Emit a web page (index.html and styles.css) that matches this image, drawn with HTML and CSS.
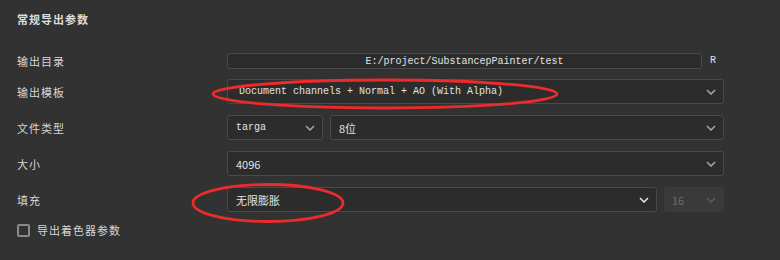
FILE: index.html
```html
<!DOCTYPE html>
<html lang="zh">
<head>
  <meta charset="UTF-8" />
  <title>常规导出参数</title>
  <link rel="stylesheet" href="styles.css">
</head>
<body>
  <main class="panneau">
    <h2 class="titre">常规导出参数</h2>

    <div class="ligne ligne-chemin">
      <span class="label">输出目录</span>
      <div class="champs">
        <div class="saisie mono centre">E:/project/SubstancepPainter/test</div>
        <span class="bouton-r">R</span>
      </div>
    </div>

    <div class="ligne">
      <span class="label">输出模板</span>
      <div class="champs">
        <div class="select mono">
          <span>Document channels + Normal + AO (With Alpha)</span>
          <svg class="chevron" width="10" height="6" viewBox="0 0 10 6"><polyline points="1,1 5,5 9,1" /></svg>
        </div>
      </div>
    </div>

    <div class="ligne">
      <span class="label">文件类型</span>
      <div class="champs">
        <div class="select mono petit">
          <span>targa</span>
          <svg class="chevron" width="10" height="6" viewBox="0 0 10 6"><polyline points="1,1 5,5 9,1" /></svg>
        </div>
        <div class="select">
          <span>8位</span>
          <svg class="chevron" width="10" height="6" viewBox="0 0 10 6"><polyline points="1,1 5,5 9,1" /></svg>
        </div>
      </div>
    </div>

    <div class="ligne">
      <span class="label">大小</span>
      <div class="champs">
        <div class="select">
          <span>4096</span>
          <svg class="chevron" width="10" height="6" viewBox="0 0 10 6"><polyline points="1,1 5,5 9,1" /></svg>
        </div>
      </div>
    </div>

    <div class="ligne">
      <span class="label">填充</span>
      <div class="champs">
        <div class="select">
          <span>无限膨胀</span>
          <svg class="chevron clair" width="10" height="6" viewBox="0 0 10 6"><polyline points="1,1 5,5 9,1" /></svg>
        </div>
        <div class="select inactif">
          <span>16</span>
          <svg class="chevron" width="10" height="6" viewBox="0 0 10 6"><polyline points="1,1 5,5 9,1" /></svg>
        </div>
      </div>
    </div>

    <label class="case">
      <span class="carre"></span>
      <span>导出着色器参数</span>
    </label>
  </main>

  <!-- annotations rouges par-dessus la capture -->
  <svg class="annotations" width="780" height="260" viewBox="0 0 780 260">
    <ellipse cx="385" cy="94" rx="172" ry="14" />
    <ellipse cx="268" cy="203" rx="75" ry="18.5" />
  </svg>
</body>
</html>
```

FILE: styles.css
```css
body {
  margin: 0;
  padding: 0;
  width: 780px;
  height: 260px;
  background-color: #323232;
  color: #d6d6d6;
  font-family: "Noto Sans CJK SC", "Liberation Sans", sans-serif;
  font-size: 11px;
  overflow: hidden;
  position: relative;
}

.panneau {
  padding: 10px 56px 0 17px;
  display: flex;
  flex-direction: column;
}

.titre {
  margin: 0 0 24px 0;
  height: 18px;
  line-height: 18px;
  font-size: 11px;
  font-weight: bold;
  letter-spacing: 1px;
  color: #dcdcdc;
}

.ligne {
  display: grid;
  grid-template-columns: 210px 1fr;
  align-items: center;
  height: 25px;
  margin-bottom: 11px;
}

.ligne-chemin {
  height: 16px;
  margin-top: 1px;
  margin-bottom: 10px;
}

.label {
  letter-spacing: 1px;
}

.champs {
  display: flex;
  gap: 7px;
  height: 100%;
}

.saisie, .select {
  box-sizing: border-box;
  height: 100%;
  border: 1px solid #4a4a4a;
  border-radius: 3px;
  background-color: #2c2c2c;
  color: #e2e2e2;
  display: flex;
  align-items: center;
  flex: 1;
}

.saisie {
  padding: 0 8px;
}

.centre {
  justify-content: center;
}

.bouton-r {
  width: 14px;
  padding-left: 1px;
  font-family: "Liberation Mono", monospace;
  font-size: 10px;
  line-height: 16px;
  color: #e0e0e0;
}

.select {
  justify-content: space-between;
  padding: 0 7px 0 8px;
}

.mono {
  font-family: "Liberation Mono", monospace;
  font-size: 10px;
}

.select.mono:not(.petit) {
  padding-left: 11px;
}

.petit {
  flex: 0 0 96px;
}

.chevron polyline {
  fill: none;
  stroke: #a8a8a8;
  stroke-width: 1.5;
}

.chevron.clair polyline {
  stroke: #e6e6e6;
}

.inactif {
  flex: 0 0 60px;
  border: none;
  background-color: #3a3a3a;
  color: #6c6c6c;
  padding: 0 8px 0 8px;
}

.inactif .chevron polyline {
  stroke: #5c5c5c;
}

.case {
  display: flex;
  align-items: center;
  gap: 7px;
  margin-top: -1px;
  letter-spacing: 1px;
}

.carre {
  width: 9px;
  height: 9px;
  border: 2px solid #8a8a8a;
  border-radius: 2px;
}

.annotations {
  position: absolute;
  left: 0;
  top: 0;
  pointer-events: none;
}

.annotations ellipse {
  fill: none;
  stroke: #ee2b2b;
  stroke-width: 2.8;
}
```
